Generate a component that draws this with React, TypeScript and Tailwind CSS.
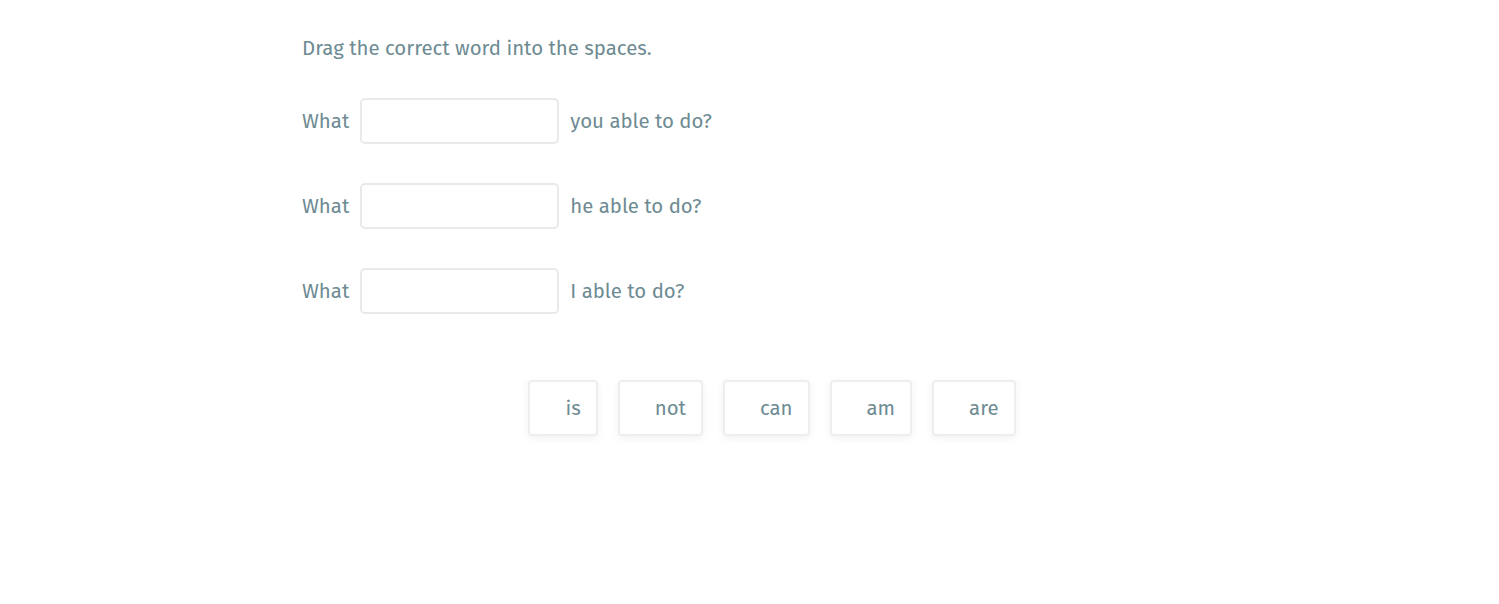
import React from "react";

const rows = [
  { after: "you able to do?" },
  { after: "he able to do?" },
  { after: "I able to do?" },
];
const words = ["is", "not", "can", "am", "are"];

export default function App() {
  return (
    <div
      className="min-h-[604px] w-full bg-white text-[#6e8b93]"
      style={{ fontFamily: "'Fira Sans', Lato, 'Noto Sans', sans-serif" }}
    >
      <div className="ml-[302px] w-[940px] pt-[34px]">
        <p className="text-[20.4px] leading-[28px]">Drag the correct word into the spaces.</p>
        <div className="mt-[36px] flex flex-col gap-[39px]">
          {rows.map((r, i) => (
            <div key={i} className="flex items-center text-[20.4px] leading-[28px]">
              <span>What</span>
              <div className="ml-[11px] mr-[11px] h-[46px] w-[199px] rounded-[5px] border-2 border-[#e8e9e9] bg-white" />
              <span>{r.after}</span>
            </div>
          ))}
        </div>
        <div className="mt-[66px] flex justify-center gap-[20px]">
          {words.map((w) => (
            <div
              key={w}
              className="flex h-[56px] items-center rounded-[4px] border-2 border-[#eeeeee] bg-white pl-[35px] pr-[15px] text-[20.4px] shadow-[0_2px_8px_rgba(0,0,0,0.06)]"
            >
              {w}
            </div>
          ))}
        </div>
      </div>
    </div>
  );
}
